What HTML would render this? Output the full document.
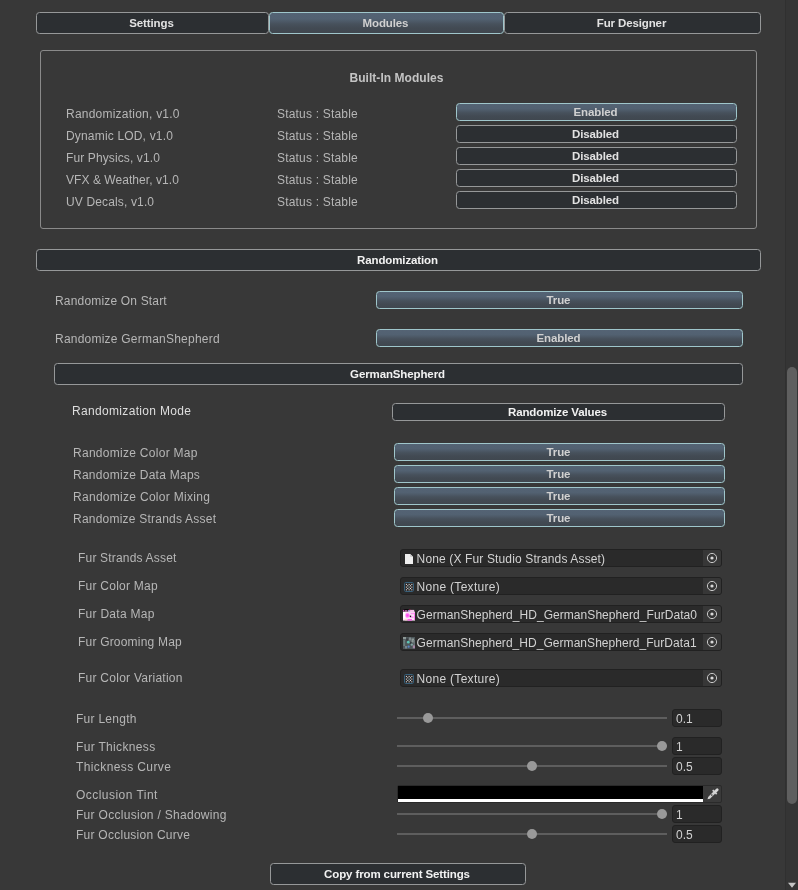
<!DOCTYPE html>
<html><head><meta charset="utf-8"><title>X-Fur Studio</title>
<style>
html,body{margin:0;padding:0;}
body{width:798px;height:890px;overflow:hidden;background:#383838;position:relative;font-family:"Liberation Sans",sans-serif;font-size:12px;color:#c4c4c4;}
#root{position:absolute;left:0;top:0;width:798px;height:890px;will-change:transform;}
.a{position:absolute;white-space:nowrap;}
.btn{position:absolute;box-sizing:border-box;border:1px solid #969899;border-radius:3.5px;background:#2c2f32;color:#e2e2e2;font-weight:bold;font-size:11.5px;text-align:center;white-space:nowrap;letter-spacing:-0.12px;text-indent:-2px;}
.on{border-color:#9fc6cb;background:linear-gradient(#546374 0%,#526171 30%,#47515c 55%,#424a53 75%,#40474f 100%);color:#d0d0d0;}
.hd{color:#f2f2f2;}
.h22{height:22px;line-height:20px;}
.h18{height:18px;line-height:16px;}
.lbl{position:absolute;white-space:nowrap;line-height:14px;}
.panel{position:absolute;box-sizing:border-box;border:1px solid #8a8a8a;border-radius:3px;}
.fld{position:absolute;box-sizing:border-box;height:18px;border:1px solid #212121;border-radius:3px;background:#2a2a2a;color:#d2d2d2;line-height:18px;white-space:nowrap;}
.obj .ic{position:absolute;}
.obj .ot{position:absolute;top:0;}
.obj .pick{position:absolute;right:0;top:0;width:18px;height:16px;background:#373737;border-radius:0 2px 2px 0;}
.obj .pick svg{position:absolute;left:3px;top:2px;}
.sl{position:absolute;left:397px;width:270px;height:2px;background:#5e5e5e;}
.kn{position:absolute;width:10px;height:10px;border-radius:5px;background:#999;}
.num{left:672px;width:50px;padding-left:3px;}
</style></head><body><div id="root">
<div class="btn h22" style="left:36px;top:12px;width:233px;">Settings</div>
<div class="btn h22 on" style="left:269px;top:12px;width:235px;">Modules</div>
<div class="btn h22" style="left:504px;top:12px;width:257px;">Fur Designer</div>
<div class="panel" style="left:40px;top:50px;width:717px;height:179px;"></div>
<div class="a" style="left:38px;top:71px;width:717px;text-align:center;font-weight:bold;color:#c4c4c4;line-height:14px;letter-spacing:0.05px;">Built-In Modules</div>
<div class="lbl" style="left:66px;top:107px;letter-spacing:0.228px;color:#b6b6b6;">Randomization, v1.0</div>
<div class="lbl" style="left:66px;top:129px;letter-spacing:0.175px;color:#b6b6b6;">Dynamic LOD, v1.0</div>
<div class="lbl" style="left:66px;top:151px;letter-spacing:0.113px;color:#b6b6b6;">Fur Physics, v1.0</div>
<div class="lbl" style="left:66px;top:173px;letter-spacing:0.056px;color:#b6b6b6;">VFX &amp; Weather, v1.0</div>
<div class="lbl" style="left:66px;top:195px;letter-spacing:0.143px;color:#b6b6b6;">UV Decals, v1.0</div>
<div class="lbl" style="left:277px;top:107px;letter-spacing:0.193px;color:#b6b6b6;">Status : Stable</div>
<div class="lbl" style="left:277px;top:129px;letter-spacing:0.193px;color:#b6b6b6;">Status : Stable</div>
<div class="lbl" style="left:277px;top:151px;letter-spacing:0.193px;color:#b6b6b6;">Status : Stable</div>
<div class="lbl" style="left:277px;top:173px;letter-spacing:0.193px;color:#b6b6b6;">Status : Stable</div>
<div class="lbl" style="left:277px;top:195px;letter-spacing:0.193px;color:#b6b6b6;">Status : Stable</div>
<div class="lbl" style="left:55px;top:294px;letter-spacing:0.176px;color:#b6b6b6;">Randomize On Start</div>
<div class="lbl" style="left:55px;top:332px;letter-spacing:0.226px;color:#b6b6b6;">Randomize GermanShepherd</div>
<div class="lbl" style="left:72px;top:404px;letter-spacing:0.329px;color:#dedede;">Randomization Mode</div>
<div class="lbl" style="left:73px;top:446px;letter-spacing:0.283px;color:#b6b6b6;">Randomize Color Map</div>
<div class="lbl" style="left:73px;top:468px;letter-spacing:0.267px;color:#b6b6b6;">Randomize Data Maps</div>
<div class="lbl" style="left:73px;top:490px;letter-spacing:0.29px;color:#b6b6b6;">Randomize Color Mixing</div>
<div class="lbl" style="left:73px;top:512px;letter-spacing:0.223px;color:#b6b6b6;">Randomize Strands Asset</div>
<div class="lbl" style="left:78px;top:551px;letter-spacing:0.188px;color:#b6b6b6;">Fur Strands Asset</div>
<div class="lbl" style="left:78px;top:579px;letter-spacing:0.25px;color:#b6b6b6;">Fur Color Map</div>
<div class="lbl" style="left:78px;top:607px;letter-spacing:0.273px;color:#b6b6b6;">Fur Data Map</div>
<div class="lbl" style="left:78px;top:635px;letter-spacing:0.2px;color:#b6b6b6;">Fur Grooming Map</div>
<div class="lbl" style="left:78px;top:671px;letter-spacing:0.256px;color:#b6b6b6;">Fur Color Variation</div>
<div class="lbl" style="left:76px;top:712px;letter-spacing:0.267px;color:#b6b6b6;">Fur Length</div>
<div class="lbl" style="left:76px;top:740px;letter-spacing:0.333px;color:#b6b6b6;">Fur Thickness</div>
<div class="lbl" style="left:76px;top:760px;letter-spacing:0.393px;color:#b6b6b6;">Thickness Curve</div>
<div class="lbl" style="left:76px;top:788px;letter-spacing:0.462px;color:#b6b6b6;">Occlusion Tint</div>
<div class="lbl" style="left:76px;top:808px;letter-spacing:0.292px;color:#b6b6b6;">Fur Occlusion / Shadowing</div>
<div class="lbl" style="left:76px;top:828px;letter-spacing:0.256px;color:#b6b6b6;">Fur Occlusion Curve</div>
<div class="btn h18 on" style="left:456px;top:103px;width:281px;">Enabled</div>
<div class="btn h18" style="left:456px;top:125px;width:281px;">Disabled</div>
<div class="btn h18" style="left:456px;top:147px;width:281px;">Disabled</div>
<div class="btn h18" style="left:456px;top:169px;width:281px;">Disabled</div>
<div class="btn h18" style="left:456px;top:191px;width:281px;">Disabled</div>
<div class="btn h22 hd" style="left:36px;top:249px;width:725px;">Randomization</div>
<div class="btn h18 on" style="left:376px;top:291px;width:367px;">True</div>
<div class="btn h18 on" style="left:376px;top:329px;width:367px;">Enabled</div>
<div class="btn h22 hd" style="left:54px;top:363px;width:689px;">GermanShepherd</div>
<div class="btn h18 hd" style="left:392px;top:403px;width:333px;">Randomize Values</div>
<div class="btn h18 on" style="left:394px;top:443px;width:331px;">True</div>
<div class="btn h18 on" style="left:394px;top:465px;width:331px;">True</div>
<div class="btn h18 on" style="left:394px;top:487px;width:331px;">True</div>
<div class="btn h18 on" style="left:394px;top:509px;width:331px;">True</div>
<div class="fld obj" style="left:400px;top:549px;width:322px;"><svg class="ic" style="left:4px;top:4px" width="8" height="10" viewBox="0 0 8 10"><path d="M0 0H5.2L8 2.8V10H0Z" fill="#efefef"/><path d="M5.2 0V2.8H8Z" fill="#c6c6c6"/></svg><span class="ot" style="left:15.6px;letter-spacing:0.137px;">None (X Fur Studio Strands Asset)</span><span class="pick"><svg width="12" height="12" viewBox="0 0 12 12"><circle cx="6" cy="6" r="4.6" fill="none" stroke="#c8c8c8" stroke-width="1"/><circle cx="6" cy="6" r="1.6" fill="#d8d8d8"/></svg></span></div>
<div class="fld obj" style="left:400px;top:577px;width:322px;"><svg class="ic" style="left:3px;top:4px" width="10" height="10" viewBox="0 0 10 10"><rect x="0.5" y="0.5" width="9" height="9" rx="1.2" fill="#2b2b2b" stroke="#38607a"/><g fill="#e6dcdc"><rect x="1.90" y="1.90" width="1.05" height="1.05"/><rect x="1.90" y="4.60" width="1.05" height="1.05"/><rect x="1.90" y="7.30" width="1.05" height="1.05"/><rect x="3.25" y="3.25" width="1.05" height="1.05"/><rect x="3.25" y="5.95" width="1.05" height="1.05"/><rect x="4.60" y="1.90" width="1.05" height="1.05"/><rect x="4.60" y="7.30" width="1.05" height="1.05"/><rect x="5.95" y="3.25" width="1.05" height="1.05"/><rect x="5.95" y="5.95" width="1.05" height="1.05"/><rect x="7.30" y="1.90" width="1.05" height="1.05"/><rect x="7.30" y="4.60" width="1.05" height="1.05"/><rect x="7.30" y="7.30" width="1.05" height="1.05"/></g><rect x="4.6" y="4.6" width="1.05" height="1.05" fill="#a8d4da"/></svg><span class="ot" style="left:15.6px;letter-spacing:0.29px;">None (Texture)</span><span class="pick"><svg width="12" height="12" viewBox="0 0 12 12"><circle cx="6" cy="6" r="4.6" fill="none" stroke="#c8c8c8" stroke-width="1"/><circle cx="6" cy="6" r="1.6" fill="#d8d8d8"/></svg></span></div>
<div class="fld obj" style="left:400px;top:605px;width:322px;"><svg class="ic" style="left:2px;top:3px" width="12" height="12" viewBox="0 0 12 12"><defs><filter id="bl" x="0" y="0" width="1" height="1"><feGaussianBlur stdDeviation="0.45"/></filter><radialGradient id="mg"><stop offset="0" stop-color="#ff3cf4"/><stop offset="0.6" stop-color="#ff7af6"/><stop offset="1" stop-color="#ffd9fb"/></radialGradient></defs><rect width="7" height="3" fill="#0c0a0c"/><g filter="url(#bl)"><rect x="0" y="2.6" width="12" height="9" fill="#fbe3f7"/><rect x="5.2" y="0.9" width="6" height="2.5" fill="#f4c4ec"/><rect x="0.2" y="0.8" width="1" height="1.6" fill="#ff6ee8"/><rect x="2" y="1.4" width="2.4" height="1" fill="#ff8eea"/><circle cx="4.4" cy="6.4" r="2.8" fill="url(#mg)"/><rect x="0" y="3" width="2.3" height="6.5" fill="#ffffff"/><rect x="6.8" y="6.6" width="1.4" height="1.6" fill="#1a0d1a"/><rect x="7.6" y="4.2" width="3.4" height="1" fill="#ff80ee"/><rect x="8.2" y="7.6" width="2.4" height="1" fill="#ff6cf0"/><rect x="11.2" y="3.5" width="0.8" height="7.5" fill="#ff62ec"/><rect x="4.5" y="10" width="4.5" height="1.6" fill="#ff62ee"/><rect x="1.8" y="10.2" width="2.4" height="1.2" fill="#ffd0c8"/><rect x="6.3" y="0.4" width="1" height="1" fill="#e02060"/><rect x="5.6" y="1.3" width="1" height="1" fill="#2a7cff"/></g></svg><span class="ot" style="left:15.6px;letter-spacing:0.055px;">GermanShepherd_HD_GermanShepherd_FurData0</span><span class="pick"><svg width="12" height="12" viewBox="0 0 12 12"><circle cx="6" cy="6" r="4.6" fill="none" stroke="#c8c8c8" stroke-width="1"/><circle cx="6" cy="6" r="1.6" fill="#d8d8d8"/></svg></span></div>
<div class="fld obj" style="left:400px;top:633px;width:322px;"><svg class="ic" style="left:2px;top:3px" width="12" height="12" viewBox="0 0 12 12"><defs><filter id="bl2" x="0" y="0" width="1" height="1"><feGaussianBlur stdDeviation="0.55"/></filter></defs><rect width="12" height="12" fill="#4d5659"/><g filter="url(#bl2)"><rect x="0" y="0" width="3" height="2.2" fill="#8c9896"/><rect x="0.3" y="3" width="1.8" height="6" fill="#6a7e7c"/><rect x="6" y="0.5" width="2" height="3" fill="#7f898c"/><rect x="8.5" y="1.5" width="2.5" height="4" fill="#8d9997"/><rect x="3.2" y="1.5" width="1.8" height="2.2" fill="#343a3d"/><rect x="7" y="5" width="1.6" height="2.4" fill="#363c40"/><circle cx="5.3" cy="5.2" r="1.35" fill="#5cc4b4"/><circle cx="8.8" cy="7.6" r="1.2" fill="#84a8a4"/><circle cx="5.6" cy="9.7" r="1.15" fill="#5683c4"/><rect x="9.8" y="8.3" width="2.2" height="3" fill="#a68aa6"/><rect x="2" y="9" width="2" height="2.5" fill="#74858c"/><rect x="10.5" y="3" width="1.5" height="5" fill="#677375"/></g></svg><span class="ot" style="left:15.6px;letter-spacing:0.045px;">GermanShepherd_HD_GermanShepherd_FurData1</span><span class="pick"><svg width="12" height="12" viewBox="0 0 12 12"><circle cx="6" cy="6" r="4.6" fill="none" stroke="#c8c8c8" stroke-width="1"/><circle cx="6" cy="6" r="1.6" fill="#d8d8d8"/></svg></span></div>
<div class="fld obj" style="left:400px;top:669px;width:322px;"><svg class="ic" style="left:3px;top:4px" width="10" height="10" viewBox="0 0 10 10"><rect x="0.5" y="0.5" width="9" height="9" rx="1.2" fill="#2b2b2b" stroke="#38607a"/><g fill="#e6dcdc"><rect x="1.90" y="1.90" width="1.05" height="1.05"/><rect x="1.90" y="4.60" width="1.05" height="1.05"/><rect x="1.90" y="7.30" width="1.05" height="1.05"/><rect x="3.25" y="3.25" width="1.05" height="1.05"/><rect x="3.25" y="5.95" width="1.05" height="1.05"/><rect x="4.60" y="1.90" width="1.05" height="1.05"/><rect x="4.60" y="7.30" width="1.05" height="1.05"/><rect x="5.95" y="3.25" width="1.05" height="1.05"/><rect x="5.95" y="5.95" width="1.05" height="1.05"/><rect x="7.30" y="1.90" width="1.05" height="1.05"/><rect x="7.30" y="4.60" width="1.05" height="1.05"/><rect x="7.30" y="7.30" width="1.05" height="1.05"/></g><rect x="4.6" y="4.6" width="1.05" height="1.05" fill="#a8d4da"/></svg><span class="ot" style="left:15.6px;letter-spacing:0.29px;">None (Texture)</span><span class="pick"><svg width="12" height="12" viewBox="0 0 12 12"><circle cx="6" cy="6" r="4.6" fill="none" stroke="#c8c8c8" stroke-width="1"/><circle cx="6" cy="6" r="1.6" fill="#d8d8d8"/></svg></span></div>
<div class="sl" style="top:717px;"></div><div class="kn" style="left:423px;top:713px;"></div><div class="fld num" style="top:709px;">0.1</div>
<div class="sl" style="top:745px;"></div><div class="kn" style="left:657px;top:741px;"></div><div class="fld num" style="top:737px;">1</div>
<div class="sl" style="top:765px;"></div><div class="kn" style="left:527px;top:761px;"></div><div class="fld num" style="top:757px;">0.5</div>
<div class="sl" style="top:813px;"></div><div class="kn" style="left:657px;top:809px;"></div><div class="fld num" style="top:805px;">1</div>
<div class="sl" style="top:833px;"></div><div class="kn" style="left:527px;top:829px;"></div><div class="fld num" style="top:825px;">0.5</div>
<div class="a" style="left:397px;top:785px;width:325px;height:18px;box-sizing:border-box;border:1px solid #2a2a2a;border-radius:2px;background:#3a3a3a;"></div>
<div class="a" style="left:398px;top:786px;width:305px;height:13px;background:#000;"></div>
<div class="a" style="left:398px;top:799px;width:305px;height:3px;background:#fff;"></div>
<svg class="a" style="left:705px;top:787px;" width="14" height="14" viewBox="0 0 14 14"><path d="M2.5 12.3L3.2 9.9L8.5 4.6L10.3 6.4L5 11.7Z" fill="#cfcfcf"/><path d="M7.7 3.2L11.7 7.2" stroke="#cfcfcf" stroke-width="1.7"/><path d="M10.2 4.7L12.2 2.7" stroke="#d6d6d6" stroke-width="2.7" stroke-linecap="round"/><circle cx="6.8" cy="8.1" r="0.8" fill="#3a3a3a"/></svg>
<div class="btn h22 hd" style="left:270px;top:863px;width:256px;">Copy from current Settings</div>
<div class="a" style="left:785px;top:0;width:13px;height:890px;background:#353535;border-left:1px solid #303030;box-sizing:border-box;"></div>
<div class="a" style="left:787px;top:367px;width:10px;height:437px;border-radius:5px;background:#5f5f5f;"></div>
<svg class="a" style="left:788px;top:882px;" width="8" height="7" viewBox="0 0 8 7"><path d="M0 0.8H8L4 5.8Z" fill="#c4c4c4"/></svg>
</div></body></html>
